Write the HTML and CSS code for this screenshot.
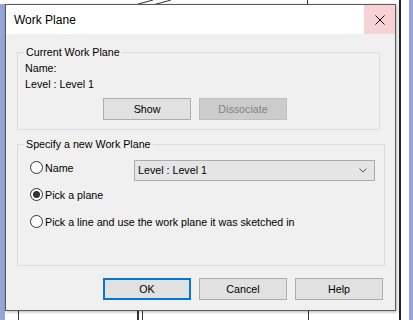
FILE: index.html
```html
<!DOCTYPE html>
<html>
<head>
<meta charset="utf-8">
<link rel="stylesheet" href="styles.css">
</head>
<body>
<div class="desktop">
  <div class="bg-line v1"></div>
  <div class="bg-line v2"></div>
  <div class="bg-line v3"></div>
  <div class="bg-line v4"></div>
  <div class="bg-line v5"></div>
  <div class="bg-line v6"></div>
  <div class="bg-strip-left"></div>
  <div class="bg-strip-right"></div>
  <svg class="bg-diag" width="60" height="6" viewBox="0 0 60 6"><path d="M0 5.5 L20 0 M18 5.5 L38 0" stroke="#333" stroke-width="1" fill="none"/></svg>

  <div class="dialog">
    <div class="titlebar">
      <span class="title">Work Plane</span>
      <div class="close">
        <svg width="10" height="10" viewBox="0 0 10 10"><path d="M0.5 0.5 L9.5 9.5 M9.5 0.5 L0.5 9.5" stroke="#111" stroke-width="1" fill="none"/></svg>
      </div>
    </div>
    <div class="body">
      <div class="group g1">
        <span class="legend">Current Work Plane</span>
        <div class="line">Name:</div>
        <div class="line">Level : Level 1</div>
        <div class="btnrow">
          <button class="btn">Show</button>
          <button class="btn disabled">Dissociate</button>
        </div>
      </div>
      <div class="group g2">
        <span class="legend">Specify a new Work Plane</span>
        <div class="opt opt-name">
          <span class="radio"></span><span class="lbl">Name</span>
          <div class="combo"><span>Level : Level 1</span>
            <svg width="8" height="5" viewBox="0 0 8 5"><path d="M0.5 0.5 L4 4 L7.5 0.5" stroke="#555" stroke-width="1" fill="none"/></svg>
          </div>
        </div>
        <div class="opt"><span class="radio checked"></span><span class="lbl">Pick a plane</span></div>
        <div class="opt"><span class="radio"></span><span class="lbl">Pick a line and use the work plane it was sketched in</span></div>
      </div>
      <div class="footer">
        <button class="btn default">OK</button>
        <button class="btn">Cancel</button>
        <button class="btn">Help</button>
      </div>
    </div>
  </div>
</div>
</body>
</html>
```
FILE: styles.css
```css
html, body { margin: 0; padding: 0; }
body { background: #fff; font-family: "Liberation Sans", Arial, sans-serif; font-size: 10.7px; color: #000; }
.desktop { position: relative; width: 413px; height: 320px; overflow: hidden; background: #fff; }
.bg-line { position: absolute; background: #333; width: 1px; }
.v1 { left: 307px; top: 0; height: 5px; }
.v2 { left: 399px; top: 0; height: 320px; width: 2px; background: #222; }
.v3 { left: 18px; top: 311px; height: 9px; }
.v4 { left: 137px; top: 311px; height: 9px; width: 2px; }
.v5 { left: 142px; top: 311px; height: 9px; }
.v6 { left: 308px; top: 311px; height: 9px; }
.bg-strip-left { position: absolute; left: 0; top: 4px; width: 5px; height: 316px; background: #95a5d6; }
.bg-strip-right { position: absolute; left: 409px; top: 0; width: 4px; height: 320px; background: #95a5d6; }
.bg-diag { position: absolute; left: 133px; top: 0; }

.dialog { position: absolute; left: 5px; top: 4px; width: 389px; height: 305px; border: 1px solid #5a5a5a; background: #f0f0f0; box-shadow: 1px 1px 3px rgba(0,0,0,0.3); display: flex; flex-direction: column; }
.titlebar { height: 29px; flex: none; background: #fff; display: flex; align-items: center; justify-content: space-between; }
.title { padding-left: 8px; font-size: 12px; color: #000; }
.close { width: 31px; height: 29px; background: #f6d2d4; display: flex; align-items: center; justify-content: center; }
.body { padding-left: 11px; }
.group { border: 1px solid #dcdcdc; position: relative; box-sizing: border-box; }
.legend { position: absolute; left: 6px; top: -8px; padding: 0 2px; background: #f0f0f0; line-height: 14px; }
.g1 { width: 363px; height: 78px; margin-top: 18px; padding: 7px 0 0 7px; }
.line { line-height: 16px; }
.btnrow { display: flex; gap: 8px; margin-left: 78px; margin-top: 6px; }
.btn { font-family: inherit; font-size: 10.7px; width: 88px; height: 22px; box-sizing: border-box; background: #e1e1e1; border: 1px solid #adadad; padding: 0; color: #000; }
.btn.disabled { background: #cccccc; border-color: #bfbfbf; color: #838383; }
.g2 { width: 368px; height: 122px; margin-top: 14px; padding: 9px 0 0 12px; }
.opt { display: flex; align-items: center; height: 27px; }
.radio { width: 11px; height: 11px; border: 1px solid #333; border-radius: 50%; background: #fff; margin-right: 2px; display: flex; align-items: center; justify-content: center; flex: none; }
.radio.checked::after { content: ""; width: 7px; height: 7px; border-radius: 50%; background: #333; }
.combo { margin-left: auto; margin-right: 9px; margin-top: 5px; width: 241px; height: 21px; box-sizing: border-box; border: 1px solid #acacac; background: #e5e5e5; display: flex; align-items: center; justify-content: space-between; padding: 0 7px 0 3px; }
.footer { display: flex; gap: 8px; margin-left: 86px; margin-top: 12px; }
.btn.default { border: 2px solid #0078d7; }
```
